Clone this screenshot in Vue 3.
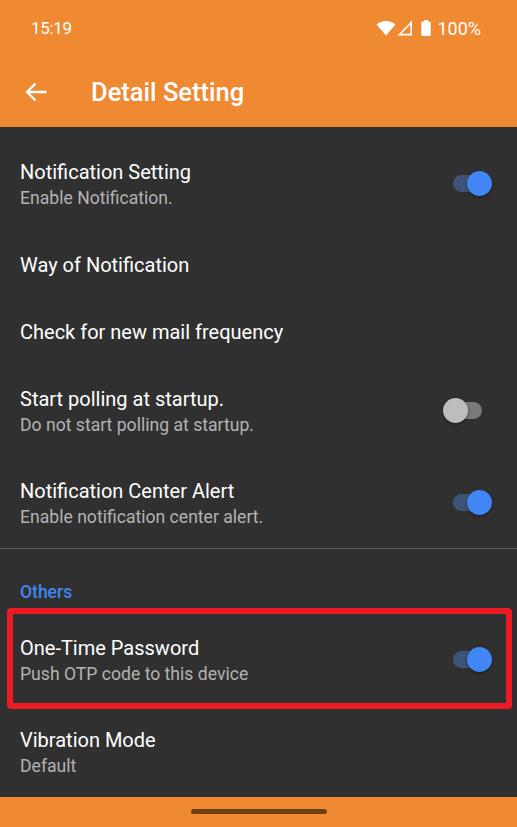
<script setup>
const rowsA = [
  { title: 'Notification Setting', sub: 'Enable Notification.', toggle: 'on' },
  { title: 'Way of Notification' },
  { title: 'Check for new mail frequency' },
  { title: 'Start polling at startup.', sub: 'Do not start polling at startup.', toggle: 'off' },
  { title: 'Notification Center Alert', sub: 'Enable notification center alert.', toggle: 'on' },
]
const rowsB = [
  { title: 'One-Time Password', sub: 'Push OTP code to this device', toggle: 'on', marked: true },
  { title: 'Vibration Mode', sub: 'Default' },
]
</script>

<template>
  <div class="screen">
    <header class="head">
      <div class="status">
        <span class="time">15:19</span>
        <div class="status-right">
          <svg class="wifi" viewBox="0 0 20 16" width="20" height="16"><path d="M10 15.500 0.600 4.600C3 2.400 6.300 1 10 1s7 1.400 9.400 3.600z" fill="#fff"/></svg>
          <svg class="signal" viewBox="0 0 16 16" width="16" height="16"><path d="M15 .500V15.500H.500zM13.300 4.600 4.500 13.800h8.800z" fill="#fff" fill-rule="evenodd"/></svg>
          <svg class="battery" viewBox="0 0 10 16" width="10" height="16"><path d="M3 0h4v1.500h1.500a1.200 1.200 0 0 1 1.200 1.200V14.800A1.200 1.200 0 0 1 8.500 16h-7A1.200 1.200 0 0 1 .3 14.800V2.700A1.200 1.200 0 0 1 1.500 1.500H3z" fill="#fff"/></svg>
          <span class="pct">100%</span>
        </div>
      </div>
      <div class="bar">
        <svg class="back" viewBox="0 0 22 20" width="22" height="20"><path d="M21.500 10H2.500M10.500 1.500 2 10l8.500 8.500" fill="none" stroke="#fff" stroke-width="2.300"/></svg>
        <h1 class="heading">Detail Setting</h1>
      </div>
    </header>

    <main class="list">
      <div v-for="r in rowsA" :key="r.title" class="row" :class="{ single: !r.sub }">
        <div class="texts">
          <div class="title">{{ r.title }}</div>
          <div v-if="r.sub" class="sub">{{ r.sub }}</div>
        </div>
        <div v-if="r.toggle" class="switch" :class="r.toggle"><span class="knob"></span></div>
      </div>
      <div class="divider"></div>
      <div class="section">Others</div>
      <div v-for="r in rowsB" :key="r.title" class="row">
        <div class="texts">
          <div class="title">{{ r.title }}</div>
          <div class="sub">{{ r.sub }}</div>
        </div>
        <div v-if="r.toggle" class="switch" :class="r.toggle"><span class="knob"></span></div>
        <div v-if="r.marked" class="mark"></div>
      </div>
    </main>

    <footer class="nav"><span class="pill"></span></footer>
  </div>
</template>

<style scoped>
.screen {
  width: 517px;
  height: 827px;
  display: flex;
  flex-direction: column;
  background: #303030;
  font-family: Roboto, "Liberation Sans", sans-serif;
  overflow: hidden;
}
.head {
  background: #f08a32;
  height: 127px;
  flex: none;
  color: #fff;
}
.status {
  height: 56px;
  padding: 0 36px 0 31px;
  display: flex;
  align-items: center;
  justify-content: space-between;
}
.time {
  font-size: 17px;
  letter-spacing: -0.3px;
}
.pct {
  font-size: 18px;
}
.status-right {
  display: flex;
  align-items: center;
}
.wifi { margin-right: 1px; }
.signal { margin-right: 8px; }
.battery { margin-right: 6px; }
.bar {
  display: flex;
  align-items: center;
  height: 71px;
  padding-left: 25px;
}
.back { flex: none; }
.heading {
  margin: 0 0 0 44px;
  padding-top: 2px;
  font-size: 25.500px;
  font-weight: 500;
  line-height: 69px;
}
.list {
  flex: 1;
  padding-top: 10px;
}
.row {
  position: relative;
  height: 92px;
  padding: 0 24px 0 20px;
  display: flex;
  align-items: center;
  justify-content: space-between;
}
.row.single { height: 67.500px; }
.texts { padding-top: 4px; }
.title {
  font-size: 20px;
  line-height: 26px;
  color: #fff;
}
.sub {
  font-size: 17.600px;
  line-height: 26px;
  color: #b3b3b3;
}
.switch {
  position: relative;
  width: 34px;
  height: 17px;
  border-radius: 9px;
}
.switch.on { background: #3d5478; margin-right: 6px; }
.switch.off { background: #7a7a7a; margin-right: 11px; }
.knob {
  position: absolute;
  top: -4px;
  width: 25px;
  height: 25px;
  border-radius: 50%;
  box-shadow: 0 1px 3px rgba(0, 0, 0, 0.5);
}
.on .knob { right: -5px; background: #4285f4; }
.off .knob { left: -5px; background: #bdbdbd; }
.divider {
  height: 1px;
  background: #5a5a5a;
}
.section {
  height: 64px;
  padding: 30px 0 0 20px;
  box-sizing: border-box;
  font-size: 17.500px;
  line-height: 26px;
  font-weight: 500;
  color: #4285f4;
}
.mark {
  position: absolute;
  left: 7px;
  right: 5px;
  top: -5px;
  bottom: -4px;
  border: 6px solid #ed1c24;
  border-radius: 4px;
}
.nav {
  height: 30px;
  flex: none;
  background: #f08a32;
  display: flex;
  justify-content: center;
  padding-top: 12px;
  box-sizing: border-box;
}
.pill {
  width: 136px;
  height: 5px;
  border-radius: 3px;
  background: #6f3f10;
}
</style>
